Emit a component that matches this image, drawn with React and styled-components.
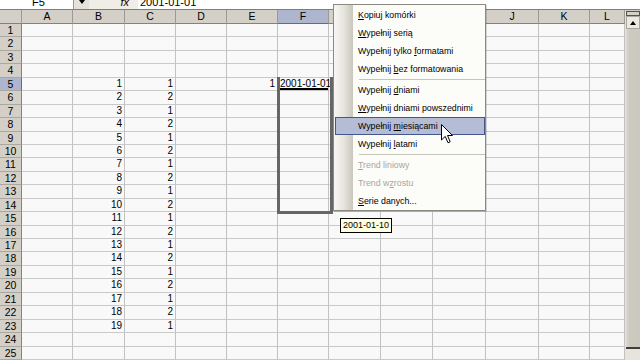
import React from 'react';
import styled, { createGlobalStyle } from 'styled-components';

const Global = createGlobalStyle`
  html, body { margin: 0; padding: 0; background: #fff; }
  body { font-family: "Liberation Sans", Arial, sans-serif; }
`;

const Screen = styled.div`
  position: relative;
  width: 640px;
  height: 360px;
  overflow: hidden;
  background: #f9f9f9;
  display: flex;
  flex-direction: column;
  font-family: "Liberation Sans", Arial, sans-serif;
  color: #000;
`;

const FormulaBar = styled.div`
  flex: none;
  height: 9px;
  display: flex;
  align-items: stretch;
  border-bottom: 1px solid #7f7d76;
  background: #efede6;
  overflow: hidden;
`;

const NameBox = styled.div`
  width: 74px;
  box-sizing: border-box;
  background: #fff;
  border-right: 1px solid #9c9a92;
  display: flex;
  align-items: flex-end;
  padding-left: 32px;
`;

const DropBtn = styled.div`
  width: 15px;
  display: flex;
  justify-content: center;
  background: #e4e2da;
  &::after {
    content: "";
    border-left: 3.5px solid transparent;
    border-right: 3.5px solid transparent;
    border-top: 4px solid #000;
    height: 0;
  }
`;

const FxLabel = styled.div`
  width: 49px;
  display: flex;
  align-items: flex-end;
  justify-content: flex-end;
  padding-right: 9px;
  box-sizing: border-box;
  font-style: italic;
`;

const InputField = styled.div`
  flex: 1;
  background: #fff;
  display: flex;
  align-items: flex-end;
  padding-left: 2px;
`;

const BarText = styled.span`
  font-size: 11px;
  line-height: 11px;
  margin-bottom: 1px;
  white-space: nowrap;
`;

const Main = styled.div`
  flex: 1;
  display: flex;
  min-height: 0;
`;

const Sheet = styled.div`
  flex: 1;
  display: grid;
  grid-template-columns: 22px 51px 52px 51px 51px 51px 51px 52px 52px 53px 53px 51px 1fr;
  grid-template-rows: 14px repeat(25, 13.44px);
  overflow: hidden;
`;

const ColHead = styled.div`
  box-sizing: border-box;
  background: ${p => (p.$sel ? '#aeb6cf' : '#d4d0c8')};
  border-right: 1px solid #9d9a91;
  border-bottom: 1px solid ${p => (p.$sel ? '#5e6a90' : '#85827a')};
  font-size: 10.5px;
  line-height: 13px;
  text-align: center;
  white-space: nowrap;
  overflow: hidden;
`;

const RowHead = styled.div`
  box-sizing: border-box;
  background: ${p => (p.$sel ? '#aeb6cf' : '#d4d0c8')};
  border-right: 1px solid ${p => (p.$sel ? '#5e6a90' : '#85827a')};
  border-bottom: 1px solid #aaa79e;
  font-size: 10.5px;
  line-height: 12.5px;
  text-align: center;
`;

const Cell = styled.div`
  box-sizing: border-box;
  border-right: 1px solid #c2c2c2;
  border-bottom: 1px solid #c9c9c9;
  font-size: 10px;
  line-height: 12.5px;
  padding: 0 2px;
  text-align: ${p => p.$align || 'left'};
  white-space: nowrap;
  box-shadow: ${p => (p.$active ? 'inset 0 -2px 0 #000' : 'none')};
`;

const VScroll = styled.div`
  width: 15px;
  flex: none;
  display: flex;
  flex-direction: column;
  background: #cfccc3;
  border-left: 1px solid #e4e2db;
  box-sizing: border-box;
`;

const SplitBox = styled.div`
  height: 3px;
  margin-top: 1px;
  border: 1px solid #55534e;
  background: #d4d0c8;
`;

const ScrollBtn = styled.div`
  height: 13px;
  box-sizing: border-box;
  background: #ece9e2;
  border: 1px solid #a9a69d;
  display: flex;
  align-items: center;
  justify-content: center;
  &::after {
    content: "";
    border-left: 3px solid transparent;
    border-right: 3px solid transparent;
    border-bottom: 4px solid #000;
  }
`;

const Thumb = styled.div`
  flex: 1;
  background: linear-gradient(to right, #dedbd3 0, #cdcac1 3px, #cbc8bf 100%);
  border-bottom: 2px solid #3f3e3a;
`;

const ScrollFoot = styled.div`
  height: 11px;
  background: #e6e4dd;
`;

const RangeOutline = styled.div`
  position: absolute;
  left: 277px;
  top: 77px;
  width: 56px;
  height: 137px;
  box-sizing: border-box;
  border: 3px solid #666;
  border-top: none;
  pointer-events: none;
`;

const Menu = styled.div`
  position: absolute;
  left: 333px;
  top: 4px;
  width: 153px;
  box-sizing: border-box;
  border: 1px solid #8c897f;
  padding-top: 1px;
  background: linear-gradient(to right, #f7f6f2 0px, #e6e4dd 10px, #c9c6bc 19px, #fcfcf9 19px);
  box-shadow: 1px 1px 0 rgba(0, 0, 0, 0.15);
`;

const MenuItem = styled.div`
  height: 18px;
  box-sizing: border-box;
  margin-left: 1px;
  padding-left: 22px;
  display: flex;
  align-items: center;
  font-size: 8.8px;
  white-space: nowrap;
  color: ${p => (p.$disabled ? '#a8a69e' : '#000')};
  border: 1px solid ${p => (p.$hot ? '#45568c' : 'transparent')};
  background: ${p => (p.$hot ? '#b5bcd5' : 'transparent')};
  u { text-decoration: underline; text-underline-offset: 1px; }
`;

const Separator = styled.div`
  height: 3px;
  margin-left: 25px;
  display: flex;
  align-items: center;
  &::after {
    content: "";
    flex: 1;
    height: 1px;
    background: #c6c3b9;
  }
`;

const Tip = styled.div`
  position: absolute;
  left: 340px;
  top: 218px;
  width: 52px;
  height: 15px;
  box-sizing: border-box;
  background: #ffffe1;
  border: 1px solid #000;
  font-size: 9px;
  line-height: 13px;
  padding-left: 2px;
  white-space: nowrap;
`;

const Pointer = styled.svg`
  position: absolute;
  left: 441px;
  top: 124px;
  pointer-events: none;
`;

const COLS = [
  { id: 'A' }, { id: 'B' }, { id: 'C' }, { id: 'D' }, { id: 'E' }, { id: 'F', sel: true },
  { id: 'G' }, { id: 'H' }, { id: 'I' }, { id: 'J' }, { id: 'K' }, { id: 'L' },
];

function cellValue(row, col) {
  if (row >= 5 && row <= 23) {
    if (col === 'B') return { v: String(row - 4), a: 'right' };
    if (col === 'C') return { v: String(((row - 5) % 2) + 1), a: 'right' };
  }
  if (row === 5 && col === 'E') return { v: '1', a: 'right' };
  if (row === 5 && col === 'F') return { v: '2001-01-01', a: 'left', active: true };
  return { v: '', a: 'left' };
}

const MENU = [
  { k: 'kopiuj', parts: ['', 'K', 'opiuj komórki'] },
  { k: 'seria', parts: ['', 'W', 'ypełnij serią'] },
  { k: 'formaty', parts: ['Wypełnij tylko ', 'f', 'ormatami'] },
  { k: 'bez', parts: ['Wypełnij ', 'b', 'ez formatowania'] },
  { sep: true, k: 's1' },
  { k: 'dni', parts: ['Wypełnij ', 'd', 'niami'] },
  { k: 'pow', parts: ['', 'W', 'ypełnij dniami powszednimi'] },
  { k: 'mies', parts: ['Wypełnij ', 'm', 'iesiącami'], hot: true },
  { k: 'lata', parts: ['Wypełnij ', 'l', 'atami'] },
  { sep: true, k: 's2' },
  { k: 'lin', parts: ['', 'T', 'rend liniowy'], disabled: true },
  { k: 'wzr', parts: ['Trend w', 'z', 'rostu'], disabled: true },
  { k: 'serie', parts: ['', 'S', 'erie danych...'] },
];

export default function App() {
  const rows = Array.from({ length: 25 }, (_, i) => i + 1);
  return (
    <>
      <Global />
      <Screen>
        <FormulaBar>
          <NameBox><BarText>F5</BarText></NameBox>
          <DropBtn />
          <FxLabel><BarText>fx</BarText></FxLabel>
          <InputField><BarText>2001-01-01</BarText></InputField>
        </FormulaBar>
        <Main>
          <Sheet>
            <ColHead />
            {COLS.map(c => (
              <ColHead key={c.id} $sel={c.sel}>{c.id}</ColHead>
            ))}
            {rows.map(r => (
              <React.Fragment key={r}>
                <RowHead $sel={r === 5}>{r}</RowHead>
                {COLS.map(c => {
                  const cv = cellValue(r, c.id);
                  return (
                    <Cell key={c.id} $align={cv.a} $active={cv.active}>{cv.v}</Cell>
                  );
                })}
              </React.Fragment>
            ))}
          </Sheet>
          <VScroll>
            <SplitBox />
            <ScrollBtn />
            <Thumb />
            <ScrollFoot />
          </VScroll>
        </Main>

        <RangeOutline />

        <Menu>
          {MENU.map(m =>
            m.sep ? (
              <Separator key={m.k} />
            ) : (
              <MenuItem key={m.k} $hot={m.hot} $disabled={m.disabled}>
                <span>
                  {m.parts[0]}
                  <u>{m.parts[1]}</u>
                  {m.parts[2]}
                </span>
              </MenuItem>
            )
          )}
        </Menu>

        <Tip>2001-01-10</Tip>

        <Pointer width="13" height="20" viewBox="0 0 13 20">
          <path d="M0.5 0.5 L0.5 16 L4.2 12.4 L7 18.8 L9.2 17.8 L6.5 11.5 L11.5 11.5 Z" fill="#fff" stroke="#000" strokeWidth="1" strokeLinejoin="miter" />
        </Pointer>
      </Screen>
    </>
  );
}
